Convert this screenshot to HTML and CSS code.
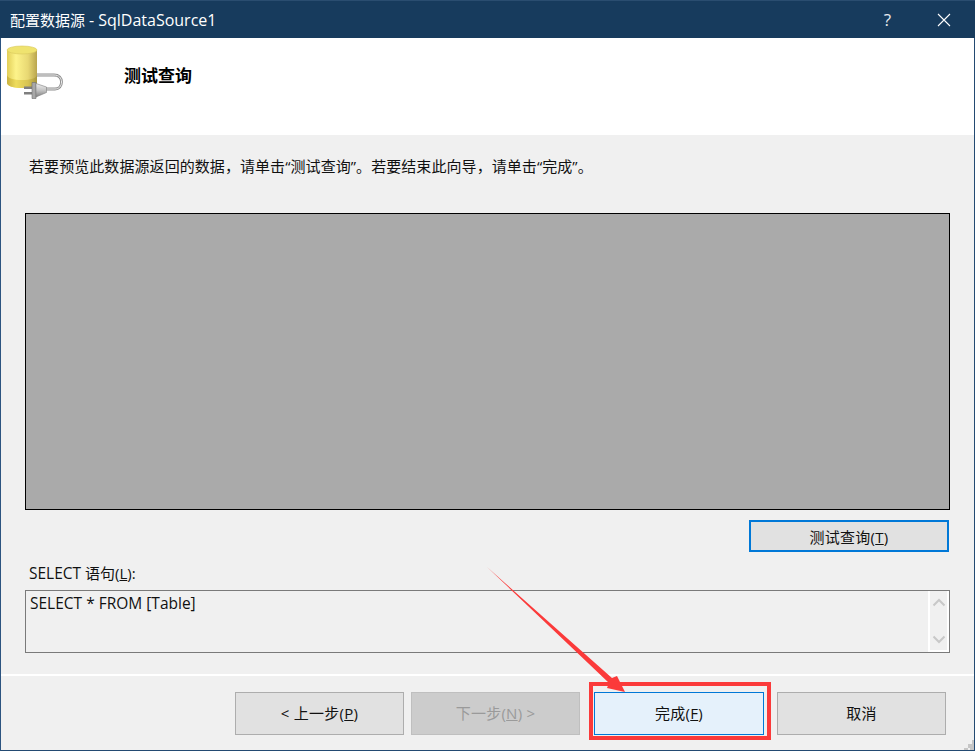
FILE: index.html
```html
<!DOCTYPE html>
<html lang="zh-CN">
<head>
<meta charset="utf-8">
<title>配置数据源 - SqlDataSource1</title>
<link rel="stylesheet" href="styles.css">
</head>
<body>
<div class="window">
  <header class="titlebar">
    <span class="title">配置数据源 <span class="latin-title">- SqlDataSource1</span></span>
    <span class="help">?</span>
    <svg class="close" width="14" height="14" viewBox="0 0 14 14"><path d="M1 1L13 13M13 1L1 13" stroke="#fff" stroke-width="1.1" fill="none"/></svg>
  </header>
  <section class="banner">
    <svg class="dbicon" width="64" height="60" viewBox="0 0 64 60">
      <defs>
        <linearGradient id="cyl" x1="0" x2="1" y1="0" y2="0">
          <stop offset="0" stop-color="#e2cf58"/><stop offset=".3" stop-color="#fdf38a"/><stop offset=".7" stop-color="#e8d873"/><stop offset="1" stop-color="#b9a54e"/>
        </linearGradient>
        <linearGradient id="cyl2" x1="0" x2="1" y1="0" y2="0">
          <stop offset="0" stop-color="#c9b23f"/><stop offset=".3" stop-color="#eedc5c"/><stop offset=".7" stop-color="#d8c452"/><stop offset="1" stop-color="#a8963f"/>
        </linearGradient>
        <linearGradient id="plug" x1="0" x2="0" y1="0" y2="1">
          <stop offset="0" stop-color="#eeeeee"/><stop offset=".5" stop-color="#c4c4c4"/><stop offset="1" stop-color="#808080"/>
        </linearGradient>
      </defs>
      <path d="M7 10V43C7 46 14 48 22 48S37 46 37 43V10Z" fill="url(#cyl)"/>
      <path d="M7 35V43C7 46 14 48 22 48S37 46 37 43V35C37 38 30 40 22 40S7 38 7 35Z" fill="url(#cyl2)"/>
      <ellipse cx="22" cy="10" rx="15" ry="4" fill="#efe36f" stroke="#d8c75c" stroke-width=".6"/>
      <path d="M37 35H54C59 35 61.500 38 61.500 42C61.500 46 59 49 55 49H46" fill="none" stroke="#8f8f8f" stroke-width="2.800"/>
      <path d="M37 35H54C59 35 61.500 38 61.500 42C61.500 46 59 49 55 49H46" fill="none" stroke="#ececec" stroke-width="1"/>
      <path d="M24 46.500H33V49H24ZM24 52H33V54.500H24Z" fill="#7f7f7f"/>
      <path d="M32 42.500H36V58.500H32Z" fill="#a8a8a8" stroke="#6f6f6f" stroke-width=".6"/>
      <path d="M36 43.500L46.500 47V52.500L36 57Z" fill="url(#plug)" stroke="#7f7f7f" stroke-width=".6"/>
    </svg>
    <h1 class="banner-title">测试查询</h1>
  </section>
  <main class="content">
    <p class="intro">若要预览此数据源返回的数据，请单击“测试查询”。若要结束此向导，请单击“完成”。</p>
    <div class="grid-area"></div>
    <div class="test-row"><button class="btn btn-test">测试查询(<u>T</u>)</button></div>
    <label class="sql-label"><span class="latin">SELECT</span> 语句(<u>L</u>):</label>
    <div class="sql-box">
      <div class="sql-text">SELECT * FROM [Table]</div>
      <div class="scroll">
        <svg width="14" height="9" viewBox="0 0 14 9"><path d="M1.500 7.500L7 2L12.500 7.500" fill="none" stroke="#c8c8c8" stroke-width="2"/></svg>
        <svg width="14" height="9" viewBox="0 0 14 9"><path d="M1.500 1.500L7 7L12.500 1.500" fill="none" stroke="#c8c8c8" stroke-width="2"/></svg>
      </div>
    </div>
  </main>
  <footer class="footer">
    <button class="btn btn-foot">&lt; 上一步(<u>P</u>)</button>
    <button class="btn btn-foot btn-disabled">下一步(<u>N</u>) &gt;</button>
    <div class="highlight"><button class="btn btn-foot btn-primary">完成(<u>F</u>)</button></div>
    <button class="btn btn-foot">取消</button>
  </footer>
  <svg class="arrow" width="975" height="751" viewBox="0 0 975 751"><path d="M487 567L612 678L617 676L625 692L607 688L609 683Z" fill="#fb3a3a"/></svg>
  <svg class="grip" width="10" height="10" viewBox="0 0 10 10"><path d="M8 0h2v8H8ZM4 4h4v4H4ZM0 8h4v2H0ZM6 8h4v2H6Z" fill="#c6c6c6"/></svg>
</div>
</body>
</html>
```
FILE: styles.css
```css
* { box-sizing: border-box; }
html, body { margin: 0; padding: 0; }
body { width: 975px; height: 751px; overflow: hidden; font-family: "Open Sans", "Noto Sans CJK SC", sans-serif; font-size: 15px; color: #111; }
.window { position: relative; width: 975px; height: 751px; display: flex; flex-direction: column; background: #f0f0f0; border-style: solid; border-color: #234a72; border-width: 0 1px 1px 1px; border-left-color: #2c5480; }
.titlebar { flex: 0 0 38px; display: flex; align-items: center; margin: 0 -1px; padding: 0 24px 0 10px; background: #173b5d; border-top: 1px solid #2a4d70; color: #fff; }
.title { flex: 1; font-size: 15px; }
.latin-title { font-size: 16px; }
.help { margin-right: 46px; font-size: 17px; color: #e8ecf0; }
.close { display: block; }
.banner { flex: 0 0 97px; display: flex; align-items: flex-start; background: #fff; }
.dbicon { margin: 2px 0 0 -1px; flex: none; }
.banner-title { margin: 26px 0 0 60px; font-size: 17px; line-height: 24px; font-weight: 700; color: #000; }
.content { flex: 0 0 541px; display: flex; flex-direction: column; padding: 0 24px; border-bottom: 2px solid #fff; }
.intro { margin: 20px 0 0 4px; height: 22px; line-height: 22px; white-space: nowrap; letter-spacing: .07px; }
.grid-area { margin-top: 36px; height: 297px; background: #aaa; border: 1px solid #000; }
.test-row { display: flex; justify-content: flex-end; padding: 10px 1px 0 0; }
.btn { display: block; width: 169px; height: 43px; padding: 0; background: #e1e1e1; border: 1px solid #adadad; font: inherit; letter-spacing: .25px; color: #111; }
.btn-foot { padding-bottom: 2px; }
.btn-test { width: 200px; height: 32px; border: 2px solid #0078d7; }
.sql-label { margin: 11px 0 0 4px; height: 20px; line-height: 20px; display: block; }
.latin { font-size: 15.5px; }
.sql-box { margin-top: 7px; height: 63px; display: flex; border: 1px solid #7a7a7a; background: #f0f0f0; }
.sql-text { flex: 1; padding: 2px 0 0 4px; line-height: 20px; font-size: 15.5px; }
.scroll { width: 21px; display: flex; flex-direction: column; justify-content: space-between; align-items: center; padding: 7px 0 6px; border: 0 solid #fff; border-width: 0 2px 2px 2px; }
.scroll svg { display: block; }
.footer { flex: 1; display: flex; align-items: flex-start; padding: 16px 0 0 234px; gap: 7px; }
.btn-disabled { background: #cccccc; border-color: #bfbfbf; color: #9a9a9a; }
.highlight { flex: none; margin: -10px -1px 0 2px; padding: 6px 3px 1px 1px; border: 4px solid #fb3a3a; display: flex; }
.btn-primary { width: 170px; background: #e5f1fb; border: 1px solid #0078d7; }
.arrow { position: absolute; left: -1px; top: 0; pointer-events: none; }
.grip { position: absolute; right: 0; bottom: 0; }
```
